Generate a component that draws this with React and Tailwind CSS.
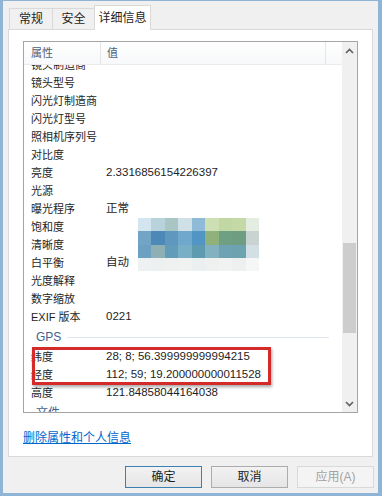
import React from "react"

const font = { fontFamily: '"Liberation Sans", "Noto Sans CJK SC", sans-serif' }

const topRows = [
  ["镜头制造商", ""],
  ["镜头型号", ""],
  ["闪光灯制造商", ""],
  ["闪光灯型号", ""],
  ["照相机序列号", ""],
  ["对比度", ""],
  ["亮度", "2.3316856154226397"],
  ["光源", ""],
  ["曝光程序", "正常"],
  ["饱和度", ""],
  ["清晰度", ""],
  ["白平衡", "自动"],
  ["光度解释", ""],
  ["数字缩放", ""],
  ["EXIF 版本", "0221"],
]

const gpsRows = [
  ["纬度", "28; 8; 56.399999999994215"],
  ["经度", "112; 59; 19.200000000011528"],
  ["高度", "121.84858044164038"],
]

// pixelated blur over the hidden value
const mosaic = [
  ["#d3e6ef", "#b9d3dc", "#aac6c4", "#cfe1e7", "#8fbbd9", "#cde0b4", "#c2d8a2", "#c4d9a5", "#e5ece1"],
  ["#72a5c5", "#4d89b7", "#5f97be", "#6ea8cd", "#5095c3", "#90b17c", "#70a084", "#6f9d82", "#c9d4d2"],
  ["#6ca1c1", "#8eb0b4", "#619cb8", "#79aec7", "#5e9bb0", "#82b2bf", "#6ea3b3", "#6da2b1", "#d2dfe5"],
  ["#eef1f1", "#edf0f0", "#eff1f1", "#f0f2f2", "#eceff0", "#eff1f0", "#f1f2f2", "#eef0f0", "#f5f6f6"],
]

function Row({ name, value }) {
  return (
    <div className="flex h-[18px] items-center text-[#1e1e1e]">
      <div className="w-[76px] shrink-0 whitespace-nowrap pl-[7px] text-[11px]">{name}</div>
      <div className="whitespace-nowrap pl-[6px] text-[11.5px]">{value}</div>
    </div>
  )
}

function GroupHeader({ label }) {
  return (
    <div className="flex h-[22px] items-center pl-[12px] pr-[13px]">
      <span className="text-[12px] text-[#3f5f8f]">{label}</span>
      <div className="ml-[6px] h-px flex-1 bg-[#dfe6ee]"></div>
    </div>
  )
}

function Chevron({ up }) {
  return (
    <svg width="9" height="6" viewBox="0 0 9 6">
      <path
        d={up ? "M1 5 L4.5 1.5 L8 5" : "M1 1 L4.5 4.5 L8 1"}
        fill="none"
        stroke="#606060"
        strokeWidth="1.6"
      />
    </svg>
  )
}

function Button({ children, focused, disabled }) {
  return (
    <button
      className={`flex h-[22px] w-[77px] items-center justify-center border text-[12px] ${
        disabled
          ? "border-[#d9d9d9] bg-[#f4f4f4] text-[#a3a3a3]"
          : focused
          ? "border-[#3c7fb1] bg-gradient-to-b from-[#f2f2f2] to-[#e5e5e5] text-[#1e1e1e]"
          : "border-[#acacac] bg-gradient-to-b from-[#f2f2f2] to-[#e5e5e5] text-[#1e1e1e]"
      }`}
    >
      {children}
    </button>
  )
}

export default function App() {
  return (
    <div
      className="relative flex h-[496px] w-[382px] flex-col overflow-hidden border-b-[3px] border-l-[3px] border-r-[4px] border-t border-[#8fb4d6] bg-[#f0f0f0]"
      style={font}
    >
      {/* tabs */}
      <div className="flex h-[28px] items-end pl-[6px]">
        <div className="flex h-[21px] w-[44px] items-center justify-center border border-b-0 border-[#d9d9d9] text-[12px] text-[#1e1e1e]">
          常规
        </div>
        <div className="-ml-px flex h-[21px] w-[43px] items-center justify-center border border-b-0 border-[#d9d9d9] text-[12px] text-[#1e1e1e]">
          安全
        </div>
        <div className="relative z-10 -mb-px -ml-px flex h-[25px] w-[57px] items-start justify-center border border-b-0 border-[#d9d9d9] bg-white pt-[3px] text-[12px] text-[#1e1e1e]">
          详细信息
        </div>
      </div>

      {/* tab panel */}
      <div className="mx-[5px] flex h-[428px] flex-col border border-[#d9d9d9] bg-white pl-[14px] pt-[11px]">
        <div className="flex h-[372px] w-[335px] border border-[#a5a5a5]">
          <div className="flex min-w-0 flex-1 flex-col">
            <div className="flex h-[22px] shrink-0 bg-gradient-to-b from-white to-[#f7f8fa] text-[11px] text-[#4c607a]">
              <div className="flex w-[77px] items-center border-r border-[#e5e5e5] pl-[7px]">属性</div>
              <div className="flex w-[225px] items-center border-r border-[#e5e5e5] pl-[6px]">值</div>
            </div>
            <div className="flex-1 overflow-hidden border-t border-[#ebebeb]">
              <div className="-mt-[9px]">
                {topRows.map(([n, v]) => (
                  <Row key={n} name={n} value={v} />
                ))}
                <GroupHeader label="GPS" />
                {gpsRows.map(([n, v]) => (
                  <Row key={n} name={n} value={v} />
                ))}
                <GroupHeader label="文件" />
              </div>
            </div>
          </div>

          {/* scrollbar */}
          <div className="flex w-[15px] shrink-0 flex-col bg-[#f0f0f0]">
            <div className="flex h-[17px] items-center justify-center">
              <Chevron up />
            </div>
            <div className="h-[184px]"></div>
            <div className="mx-[1px] h-[90px] bg-[#cdcdcd]"></div>
            <div className="flex-1"></div>
            <div className="flex h-[17px] items-center justify-center">
              <Chevron />
            </div>
          </div>
        </div>

        <div className="mt-[12px]">
          <span className="cursor-pointer text-[12px] text-[#0066cc] underline">删除属性和个人信息</span>
        </div>
      </div>

      {/* buttons */}
      <div className="mt-[9px] flex justify-end gap-[9px] pr-[4px]">
        <Button focused>确定</Button>
        <Button>取消</Button>
        <Button disabled>应用(A)</Button>
      </div>

      {/* mosaic over hidden value */}
      <div className="absolute left-[135px] top-[217px] grid h-[53px] w-[121px] grid-cols-9">
        {mosaic.flat().map((c, i) => (
          <div key={i} style={{ backgroundColor: c }}></div>
        ))}
      </div>

      {/* red highlight */}
      <div className="absolute left-[29px] top-[346px] h-[38px] w-[239px] border-[3px] border-[#d42a2a] shadow-[1px_2px_3px_rgba(0,0,0,0.35)]"></div>
    </div>
  )
}
